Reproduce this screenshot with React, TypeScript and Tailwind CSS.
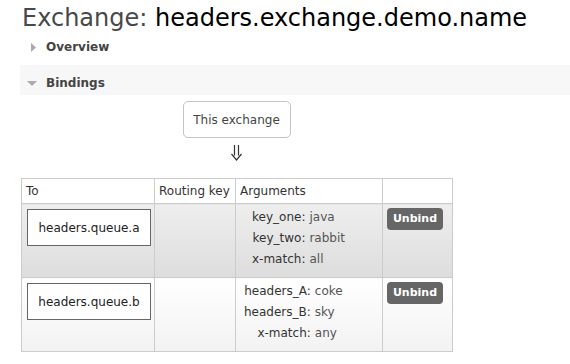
import React from "react";

const font = { fontFamily: '"DejaVu Sans", Verdana, sans-serif' };

function Args({ rows, ml }: { rows: [string, string][]; ml: string }) {
  return (
    <div className={`grid grid-cols-[auto_auto] justify-start gap-x-[4px] pt-[3px] ${ml}`}>
      {rows.map(([k, v]) => (
        <React.Fragment key={k}>
          <div className="text-right leading-[21px] text-[#333]">{k}:</div>
          <div className="leading-[21px] text-[#555]">{v}</div>
        </React.Fragment>
      ))}
    </div>
  );
}

function Row({
  queue,
  args,
  ml,
  alt,
}: {
  queue: string;
  args: [string, string][];
  ml: string;
  alt: boolean;
}) {
  const bg = alt
    ? "bg-linear-to-b from-[#eeeeee] to-[#dddddd]"
    : "bg-linear-to-b from-[#ffffff] to-[#f2f2f2]";
  return (
    <tr className="h-[74px]">
      <td className={`border border-[#cccccc] align-top pl-[5px] pt-[5px] ${bg}`}>
        <div className="w-[124px] h-[37px] border border-[#666] bg-white flex items-center justify-center text-[#222]">
          {queue}
        </div>
      </td>
      <td className={`border border-[#cccccc] ${bg}`}></td>
      <td className={`border border-[#cccccc] align-top ${bg}`}>
        <Args rows={args} ml={ml} />
      </td>
      <td className={`border border-[#cccccc] align-top pl-[4px] pt-[4px] ${bg}`}>
        <button className="w-[56px] h-[22px] rounded-[4px] bg-[#666] text-white font-bold text-[11px] flex items-center justify-center">
          Unbind
        </button>
      </td>
    </tr>
  );
}

export default function App() {
  return (
    <div className="w-[570px] h-[364px] bg-white overflow-hidden text-[12px]" style={font}>
      <h1 className="ml-[22px] pt-[5px] text-[24px] leading-[26px] font-normal">
        <span className="text-[#484848]">Exchange: </span>
        <span className="text-black">headers.exchange.demo.name</span>
      </h1>
      <div className="mt-[8px] flex items-center h-[16px]">
        <svg className="ml-[31px]" width="5" height="9" viewBox="0 0 5 9">
          <path d="M0 0 L5 4.5 L0 9 Z" fill="#aaa" />
        </svg>
        <span className="ml-[10px] font-bold text-[#444]">Overview</span>
      </div>
      <div className="mt-[10px] ml-[20px] h-[30px] pt-[5px] bg-[#f7f7f7] flex items-center">
        <svg className="ml-[7px] mt-[1px]" width="10" height="5" viewBox="0 0 10 5">
          <path d="M0 0 L10 0 L5 5 Z" fill="#aaa" />
        </svg>
        <span className="ml-[9px] font-bold text-[#444]">Bindings</span>
      </div>
      <div className="ml-[21px] w-[431px] flex flex-col items-center">
        <div className="mt-[6px] w-[108px] h-[37px] border border-[#c4c4c4] rounded-[5px] flex items-center justify-center text-[#444]">
          This exchange
        </div>
        <svg className="mt-[7px]" width="13" height="16" viewBox="0 0 13 16">
          <path
            d="M4.5 0 V10.5 M8.5 0 V10.5 M1.5 9 L6.5 15 L11.5 9"
            fill="none"
            stroke="#333"
            strokeWidth="1.2"
          />
        </svg>
      </div>
      <table className="mt-[17px] ml-[21px] w-[431px] table-fixed border-collapse">
        <colgroup>
          <col className="w-[133px]" />
          <col className="w-[81px]" />
          <col className="w-[147px]" />
          <col className="w-[70px]" />
        </colgroup>
        <thead>
          <tr className="h-[25px]">
            <th className="border border-[#cccccc] text-left font-normal text-[#333] pl-[4px]">To</th>
            <th className="border border-[#cccccc] text-left font-normal text-[#333] pl-[4px]">Routing key</th>
            <th className="border border-[#cccccc] text-left font-normal text-[#333] pl-[4px]">Arguments</th>
            <th className="border border-[#cccccc]"></th>
          </tr>
        </thead>
        <tbody>
          <Row
            queue="headers.queue.a"
            alt
            ml="ml-[16px]"
            args={[
              ["key_one", "java"],
              ["key_two", "rabbit"],
              ["x-match", "all"],
            ]}
          />
          <Row
            queue="headers.queue.b"
            alt={false}
            ml="ml-[8px]"
            args={[
              ["headers_A", "coke"],
              ["headers_B", "sky"],
              ["x-match", "any"],
            ]}
          />
        </tbody>
      </table>
    </div>
  );
}
